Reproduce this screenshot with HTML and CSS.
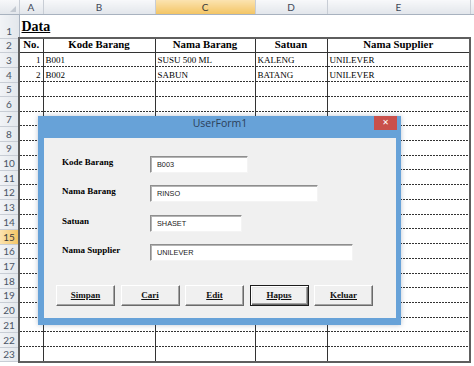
FILE: index.html
```html
<!DOCTYPE html>
<html lang="id">
<head>
  <meta charset="UTF-8" />
  <meta name="viewport" content="width=device-width, initial-scale=1.0" />
  <title>Data Barang</title>
  <link rel="stylesheet" href="styles.css">
</head>
<body>
  <table class="sheet">
    <colgroup>
      <col class="c-hdr"><col class="c-a"><col class="c-b"><col class="c-c"><col class="c-d"><col class="c-e"><col class="c-f">
    </colgroup>
    <thead>
      <tr>
        <th class="corner"></th><th>A</th><th>B</th><th class="sel">C</th><th>D</th><th>E</th><th></th>
      </tr>
    </thead>
    <tbody>
      <tr class="r1"><th>1</th><td class="title">Data</td><td></td><td></td><td></td><td></td><td></td></tr>
    </tbody>
    <tbody class="data">
      <tr class="head"><th>2</th><td>No.</td><td>Kode Barang</td><td>Nama Barang</td><td>Satuan</td><td>Nama Supplier</td><td></td></tr>
      <tr><th>3</th><td class="num">1</td><td>B001</td><td>SUSU 500 ML</td><td>KALENG</td><td>UNILEVER</td><td></td></tr>
      <tr><th>4</th><td class="num">2</td><td>B002</td><td>SABUN</td><td>BATANG</td><td>UNILEVER</td><td></td></tr>
      <tr><th>5</th><td></td><td></td><td></td><td></td><td></td><td></td></tr>
      <tr><th>6</th><td></td><td></td><td></td><td></td><td></td><td></td></tr>
      <tr><th>7</th><td></td><td></td><td></td><td></td><td></td><td></td></tr>
      <tr><th>8</th><td></td><td></td><td></td><td></td><td></td><td></td></tr>
      <tr><th>9</th><td></td><td></td><td></td><td></td><td></td><td></td></tr>
      <tr><th>10</th><td></td><td></td><td></td><td></td><td></td><td></td></tr>
      <tr><th>11</th><td></td><td></td><td></td><td></td><td></td><td></td></tr>
      <tr><th>12</th><td></td><td></td><td></td><td></td><td></td><td></td></tr>
      <tr><th>13</th><td></td><td></td><td></td><td></td><td></td><td></td></tr>
      <tr><th>14</th><td></td><td></td><td></td><td></td><td></td><td></td></tr>
      <tr><th class="sel">15</th><td></td><td></td><td></td><td></td><td></td><td></td></tr>
      <tr><th>16</th><td></td><td></td><td></td><td></td><td></td><td></td></tr>
      <tr><th>17</th><td></td><td></td><td></td><td></td><td></td><td></td></tr>
      <tr><th>18</th><td></td><td></td><td></td><td></td><td></td><td></td></tr>
      <tr><th>19</th><td></td><td></td><td></td><td></td><td></td><td></td></tr>
      <tr><th>20</th><td></td><td></td><td></td><td></td><td></td><td></td></tr>
      <tr><th>21</th><td></td><td></td><td></td><td></td><td></td><td></td></tr>
      <tr><th>22</th><td></td><td></td><td></td><td></td><td></td><td></td></tr>
      <tr><th>23</th><td></td><td></td><td></td><td></td><td></td><td></td></tr>
    </tbody>
  </table>

  <div class="userform">
    <div class="uf-title">
      UserForm1
      <span class="uf-close">&#x2715;</span>
    </div>
    <div class="uf-body">
      <div class="fields">
        <div class="field"><label>Kode Barang</label><input class="w-kode" value="B003" readonly></div>
        <div class="field"><label>Nama Barang</label><input class="w-nama" value="RINSO" readonly></div>
        <div class="field"><label>Satuan</label><input class="w-satuan" value="SHASET" readonly></div>
        <div class="field"><label>Nama Supplier</label><input class="w-supplier" value="UNILEVER" readonly></div>
      </div>
      <div class="buttons">
        <button>Simpan</button>
        <button>Cari</button>
        <button>Edit</button>
        <button class="focus">Hapus</button>
        <button>Keluar</button>
      </div>
    </div>
  </div>
</body>
</html>
```

FILE: styles.css
```css
*, *::before, *::after {
  box-sizing: border-box;
  margin: 0;
  padding: 0;
}

body {
  width: 474px;
  height: 366px;
  overflow: hidden;
  position: relative;
  background: #fff;
  color: #000;
  font-family: "Liberation Serif", "Times New Roman", serif;
}

/* spreadsheet */

.sheet {
  border-collapse: collapse;
  table-layout: fixed;
  width: 490px;
}

.c-hdr { width: 19px; }
.c-a { width: 24px; }
.c-b { width: 112px; }
.c-c { width: 100px; }
.c-d { width: 72px; }
.c-e { width: 143px; }
.c-f { width: 20px; }

.sheet thead th {
  height: 14px;
  background: linear-gradient(#f7f8fa, #e2e6eb);
  border-right: 1px solid #c8cdd5;
  border-bottom: 1px solid #a8b2bf;
  font: normal 10px "Lato", "Liberation Sans", sans-serif;
  color: #3e4858;
  text-align: center;
}

.sheet thead th.sel {
  background: linear-gradient(#fbe3b0, #f3c565);
  color: #3a3a3a;
}

.sheet th.corner {
  position: relative;
}

.sheet th.corner::after {
  content: "";
  position: absolute;
  right: 3px;
  bottom: 2px;
  border-left: 6px solid transparent;
  border-bottom: 6px solid #c3c9d1;
}

.sheet tbody th {
  background: linear-gradient(to right, #f1f3f6, #e3e7ec);
  border-right: 1px solid #a8b2bf;
  border-bottom: 1px solid #c8cdd5;
  font: normal 10px "Lato", "Liberation Sans", sans-serif;
  color: #4a5566;
  text-align: center;
  vertical-align: bottom;
  line-height: 13px;
}

.sheet tbody th.sel {
  background: linear-gradient(to right, #fbe3b0, #f3c565);
  color: #3a3a3a;
}

.sheet tr.r1 { height: 24px; }
.sheet .data tr { height: 14.73px; }

.sheet td {
  padding: 0 2px;
  font-size: 9px;
  line-height: 1;
  white-space: nowrap;
  overflow: visible;
  vertical-align: bottom;
  padding-bottom: 2px;
}

.sheet td.title {
  font-size: 14px;
  font-weight: bold;
  text-decoration: underline;
  padding-left: 2px;
  padding-bottom: 3px;
}

.data td:nth-of-type(-n+5) {
  border-right: 1px solid #333;
  background: repeating-linear-gradient(to right, #333 0 2px, transparent 2px 3px) left bottom / 100% 1px no-repeat;
}

.data td:first-of-type {
  border-left: 2px solid #5e5e5e;
}

.data td:nth-of-type(5) {
  border-right: 2px solid #5e5e5e;
}

.data tr.head td:nth-of-type(-n+5) {
  border-top: 2px solid #5e5e5e;
  border-bottom: 1px solid #333;
  background: none;
  font-size: 10.8px;
  font-weight: bold;
  text-align: center;
}

.data tr:last-child td:nth-of-type(-n+5) {
  border-bottom: 2px solid #5e5e5e;
  background: none;
}

.data td.num {
  text-align: right;
}

/* userform window */

.userform {
  position: absolute;
  left: 38px;
  top: 116px;
  width: 363px;
  height: 209px;
  background: #67a2d8;
  padding: 0 5px 7px 6px;
  box-shadow: 0 0 5px rgba(60, 90, 120, 0.35);
}

.uf-title {
  position: relative;
  height: 22px;
  line-height: 22px;
  text-align: center;
  font: 10.5px "Open Sans", "Noto Sans", sans-serif;
  color: #2c4058;
}

.uf-close {
  position: absolute;
  top: 0;
  right: -1px;
  width: 23px;
  height: 14px;
  background: #c9504b;
  color: #fff;
  font: bold 8px/14px "DejaVu Sans", sans-serif;
  text-align: center;
}

.uf-body {
  height: 180px;
  background: #f0f0f0;
  padding: 18px 0 0 12px;
}

.fields {
  display: flex;
  flex-direction: column;
  gap: 12.3px;
  padding-left: 6px;
}

.field {
  display: flex;
  height: 17px;
}

.field label {
  width: 88px;
  font-size: 9px;
  font-weight: bold;
  line-height: 12px;
}

.field input {
  height: 17px;
  padding: 0 6px;
  background: #fff;
  border: 1px solid;
  border-color: #8e8e8e #f4f4f4 #f4f4f4 #8e8e8e;
  box-shadow: inset 1px 1px 0 #b4b4b4;
  font: 7.3px "Liberation Sans", Arial, sans-serif;
  color: #1a1a1a;
  outline: none;
}

.w-kode { width: 98px; }
.w-nama { width: 168px; }
.w-satuan { width: 92px; }
.w-supplier { width: 203px; }

.buttons {
  display: flex;
  gap: 5.5px;
  margin-top: 24px;
}

.buttons button {
  width: 59px;
  height: 21px;
  background: #f0f0f0;
  border: 1px solid;
  border-color: #fff #6a6a6a #6a6a6a #fff;
  box-shadow: inset -1px -1px 0 #a3a3a3;
  font: bold 9px "Liberation Serif", "Times New Roman", serif;
  text-decoration: underline;
  color: #111;
}

.buttons button.focus {
  border: 1px solid #1c1c1c;
  box-shadow: inset 1px 1px 0 #fff, inset -1px -1px 0 #6a6a6a, inset -2px -2px 0 #a3a3a3, inset 2px 2px 0 #e6e6e6;
}
```
